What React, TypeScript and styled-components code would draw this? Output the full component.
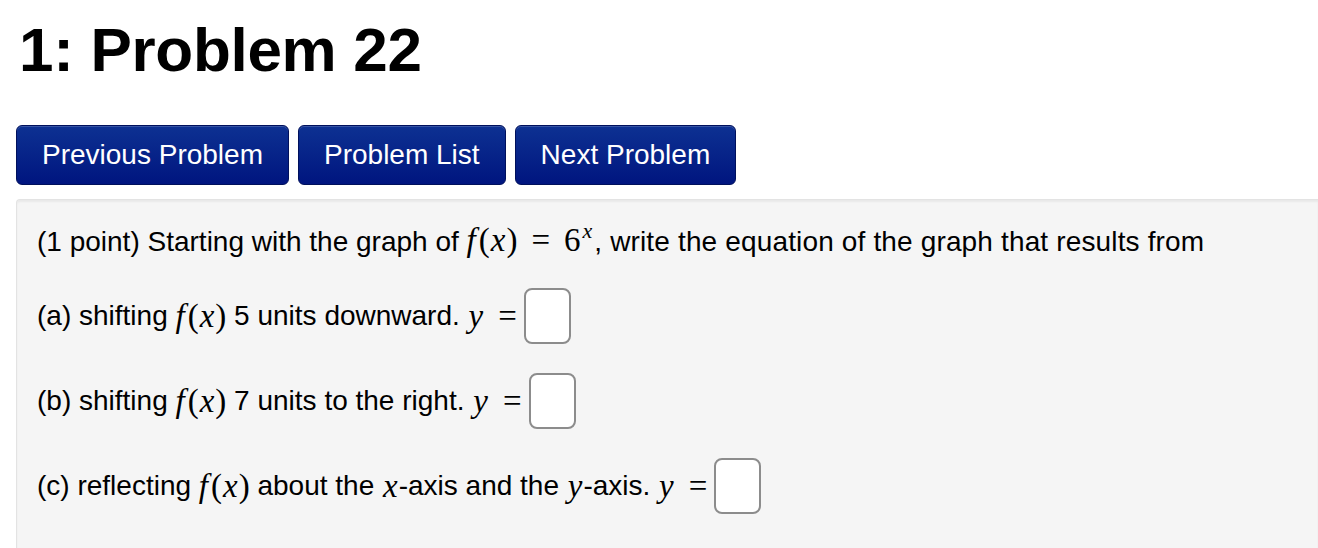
import React from 'react';
import styled, {createGlobalStyle} from 'styled-components';

const GlobalStyle = createGlobalStyle`
    html, body {
        margin: 0;
        padding: 0;
        background: #fff;
    }
    body {
        font-family: 'Liberation Sans', Arial, sans-serif;
        color: #000;
    }
`

const Page = styled.main`
    padding: 0 0 0 16px;
`

const Title = styled.h1`
    font-size: 62px;
    font-weight: bold;
    line-height: 71px;
    margin: 14px 0 0 3px;
    letter-spacing: -0.3px;
`

const Nav = styled.nav`
    display: flex;
    gap: 9px;
    margin-top: 40px;
`

const NavButton = styled.button`
    height: 60px;
    padding: 0 25px;
    border: 1px solid #00105c;
    border-radius: 6px;
    background: linear-gradient(#0d3192, #00157f);
    box-shadow: inset 0 1px 0 rgba(255, 255, 255, 0.18);
    color: #fff;
    font-family: 'Liberation Sans', Arial, sans-serif;
    font-size: 28px;
    cursor: pointer;
`

const Well = styled.section`
    margin-top: 14px;
    padding: 23px 20px 60px 20px;
    background: #f5f5f5;
    border: 1px solid #e3e3e3;
    border-right: none;
    border-radius: 4px 0 0 4px;
    box-shadow: inset 0 2px 2px rgba(0, 0, 0, 0.05);
    font-size: 28px;
`

const Intro = styled.p`
    margin: 0;
    line-height: 34px;
    white-space: pre;
`

const Tail = styled.span`
    letter-spacing: 0.15px;
`

const Part = styled.p`
    margin: 29px 0 0 0;
    display: flex;
    align-items: center;
    white-space: pre;
    line-height: 34px;
`

const M = styled.span`
    font-family: 'Liberation Serif', 'Times New Roman', serif;
    font-size: 33px;
`

const I = styled.i<{$pad?: string}>`
    font-family: 'Liberation Serif', 'Times New Roman', serif;
    font-style: italic;
    padding: ${p => p.$pad || '0 1px'};
`

const Eq = styled.span<{$left?: number; $right?: number}>`
    font-family: 'Liberation Serif', 'Times New Roman', serif;
    font-size: 33px;
    margin: 0 ${p => p.$right ?? 14}px 0 ${p => p.$left ?? 14}px;
`

const Sup = styled.sup`
    font-size: 22px;
    vertical-align: 13px;
    line-height: 0;
    padding: 0 2px 0 2px;
`

const AnswerBox = styled.input`
    box-sizing: border-box;
    width: 47px;
    height: 56px;
    border: 2px solid #8c8c8c;
    border-radius: 8px;
    background: #fff;
    outline: none;
`

function Fx() {
    return <M><I $pad="0 3px 0 0">f</I>(<I>x</I>)</M>
}

function YEq() {
    return <><M><I>y</I></M><Eq $left={14} $right={7}>=</Eq></>
}

export default function App() {
    return (
        <Page>
            <GlobalStyle />
            <Title>1: Problem 22</Title>
            <Nav>
                <NavButton>Previous Problem</NavButton>
                <NavButton>Problem List</NavButton>
                <NavButton>Next Problem</NavButton>
            </Nav>
            <Well>
                <Intro>
                    (1 point) Starting with the graph of <Fx /><Eq>=</Eq><M>6<Sup><I $pad="0">x</I></Sup></M><Tail>, write the equation of the graph that results from</Tail>
                </Intro>
                <Part>
                    (a) shifting <Fx /> 5 units downward. <YEq /><AnswerBox />
                </Part>
                <Part>
                    (b) shifting <Fx /> 7 units to the right. <YEq /><AnswerBox />
                </Part>
                <Part>
                    (c) reflecting <Fx /> about the <M><I>x</I></M>-axis and the <M><I>y</I></M>-axis. <YEq /><AnswerBox />
                </Part>
            </Well>
        </Page>
    )
}
